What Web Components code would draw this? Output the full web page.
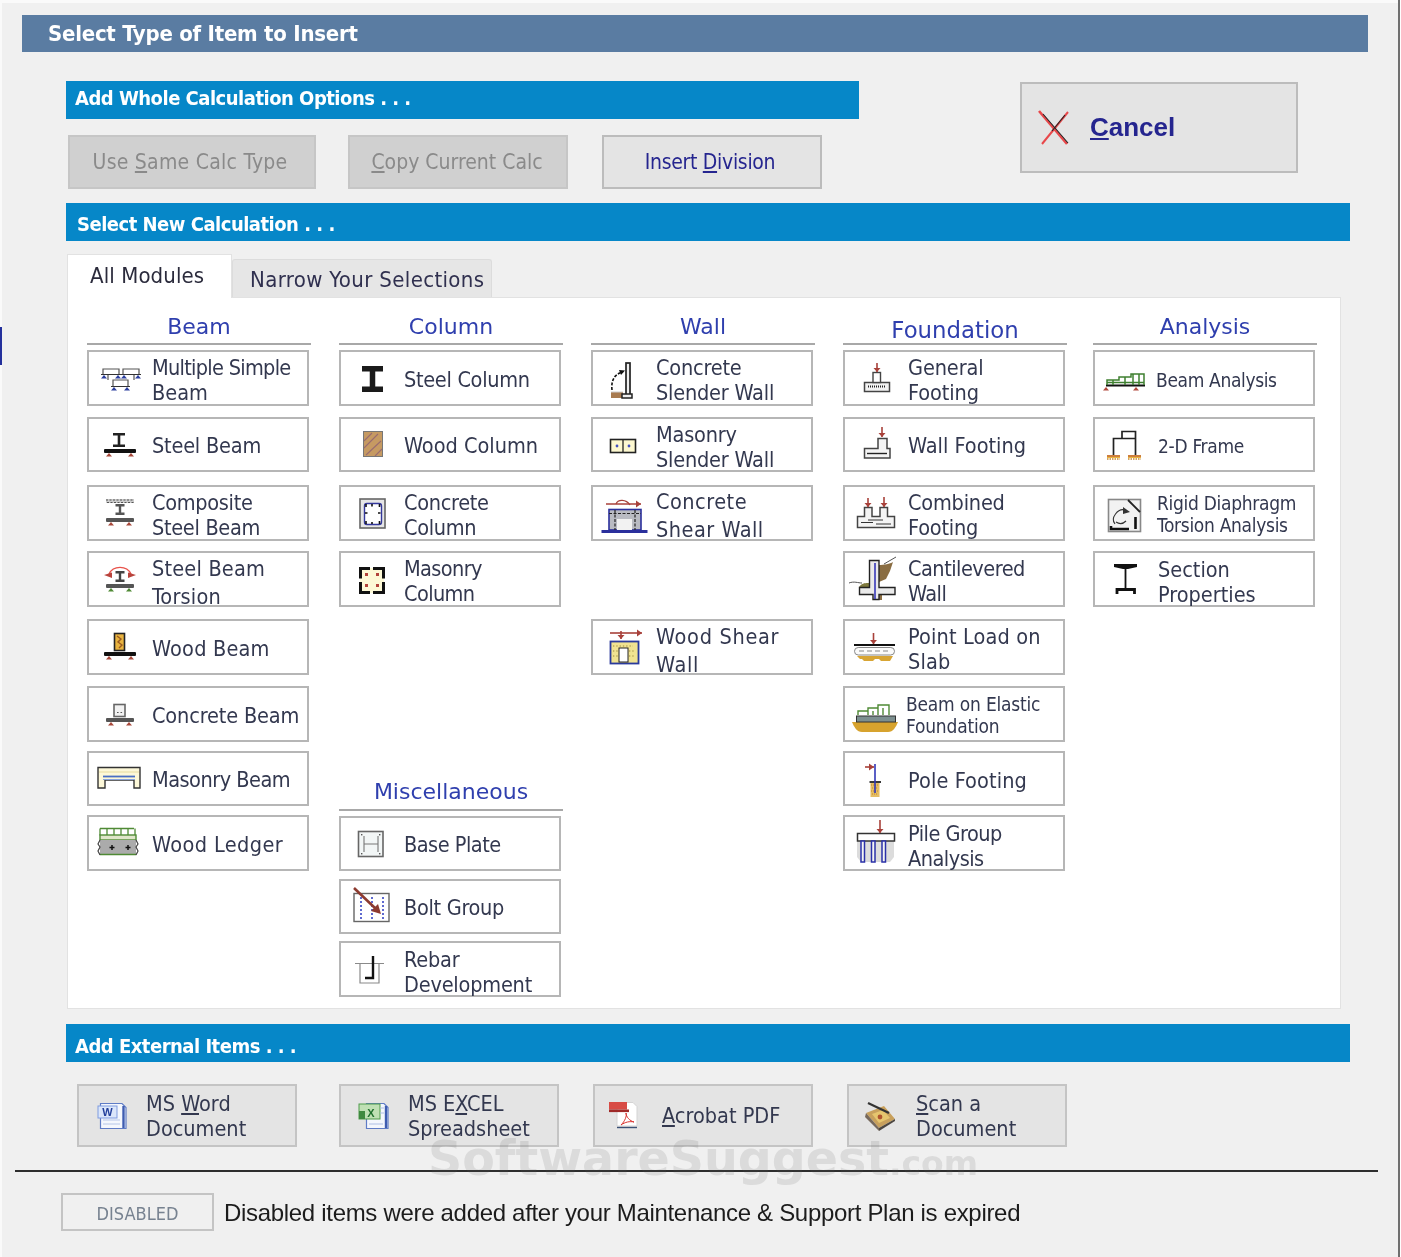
<!doctype html>
<html>
<head>
<meta charset="utf-8">
<title>Select Type of Item to Insert</title>
<style>
    html, body { margin: 0; background: #fff; }
    body { font-family: "DejaVu Sans Condensed", "DejaVu Sans", sans-serif; }
</style>
<script>
    // small drawing helpers for the engineering glyphs
    const sup = (x, y, c) => `<path d="M${x - 3} ${y + 3.5}H${x + 3}L${x} ${y}Z" fill="${c}"/>`;
    const deck = (y, bar, c, x0 = 16, x1 = 44) =>
        `<rect x="${x0}" y="${y}" width="${x1 - x0}" height="4" rx="1" fill="${bar}"/>` + sup(x0 + 5, y + 4, c) + sup(x1 - 5, y + 4, c);
    const ibeam = (x, y, w, h, t, c) =>
        `<path d="M${x - w / 2} ${y}h${w}v${t}h${-w / 2 + t / 2}v${h - 2 * t}h${w / 2 - t / 2}v${t}h${-w}v${-t}h${w / 2 - t / 2}v${-h + 2 * t}h${-w / 2 + t / 2}z" fill="${c}"/>`;
    const arrowDown = (x, y0, y1, c = '#a8413a') =>
        `<path d="M${x} ${y0}V${y1}" stroke="${c}" stroke-width="1.6" fill="none"/><path d="M${x - 3.5} ${y1 - 4}H${x + 3.5}L${x} ${y1}Z" fill="${c}"/>`;
    const arrowRight = (x0, x1, y, c = '#a8413a') =>
        `<path d="M${x0} ${y}H${x1}" stroke="${c}" stroke-width="1.6" fill="none"/><path d="M${x1 - 5} ${y - 3.5}V${y + 3.5}L${x1} ${y}Z" fill="${c}"/>`;
    const stroke = (d, c = '#333', w = 1.4, extra = '') => `<path d="${d}" fill="none" stroke="${c}" stroke-width="${w}" ${extra}/>`;
    const left = (n, s) => `<g transform="translate(${-n})">${s}</g>`;

    const ICONS = {
        multi: stroke('M13 20V15H29V20M33 20V15H49V20M23 32V26H38V32M18 21V26M44 21V26', '#555', 1.2)
            + '<path d="M11 20H31V21H11zM31 20H51V21H31zM21 32H40V33H21z" fill="#333"/>'
            + sup(14, 21, '#2c3f9e') + sup(28, 21, '#2c3f9e') + sup(34, 21, '#2c3f9e') + sup(48, 21, '#2c3f9e') + sup(24, 33, '#2c3f9e') + sup(37, 33, '#2c3f9e'),
        steel: ibeam(29, 12, 12, 14, 2.6, '#222') + deck(28, '#111', '#a8483a', 14, 46),
        composite: '<rect x="16" y="10" width="28" height="4" fill="#ccc"/>' + stroke('M16 11H44M17 13.5H44', '#555', 1, 'stroke-dasharray="2 1.5"')
            + ibeam(30, 15, 9, 11, 2.4, '#555') + deck(29, '#555', '#a8483a'),
        torsion: ibeam(30, 16, 9, 11, 2.4, '#444') + deck(29, '#555', '#4f8a35')
            + stroke('M19 19A12 11 0 0 1 41 19', '#e8524a', 1.4)
            + '<path d="M14 20L22 17.5V23ZM46 20L38 17.5V23Z" fill="#b8433c"/>',
        wood: '<rect x="24.5" y="10.5" width="10" height="17" fill="#e8b33f" stroke="#222" stroke-width="1.6"/><path d="M27 13l4 3-3 3 4 3-3 3" stroke="#9b5a20" stroke-width="1.4" fill="none"/>' + deck(29, '#111', '#a8483a', 14, 46),
        concrete: '<rect x="24" y="14.5" width="11" height="12" fill="#f2f2f2" stroke="#666" stroke-width="1.6"/><path d="M27 22.5h1.6M30.5 22.5h1.6" stroke="#555" stroke-width="1.2"/>' + deck(28, '#555', '#a8483a'),
        masonry: '<path d="M8 12.5H50V33H44V25H15V33H8Z" fill="#fdf8d8" stroke="#333" stroke-width="1.4"/>'
            + stroke('M9 17H49', '#e8dca0', 1.2) + stroke('M13 21.5H45', '#4a6fc4', 1.8) + stroke('M13 24.5H45', '#8ba5dc', 1),
        ledger: '<path d="M10 9.5h34M10 9.5v7M17 9.5v7M24 9.5v7M31 9.5v7M38 9.5v7M45 9.5v7" stroke="#4f8a35" stroke-width="1.3" fill="none"/>'
            + '<rect x="10" y="16" width="36" height="5" fill="#dfe6c9" stroke="#4f8a35" stroke-width="1.4"/>'
            + '<rect x="10" y="21" width="36" height="14" fill="#ababab"/>'
            + stroke('M10 35.5H46', '#4f8a35', 1.6) + stroke('M22 26v5M19.5 28.5h5M38 26v5M35.5 28.5h5', '#111', 1.5)
            + stroke('M10 21l-2 4 2 3-2 4 2 4M46 21l2 4-2 3 2 4-2 4', '#444', 1.2),
        sColumn: ibeam(30.5, 12, 21, 26, 5.5, '#1a1a1a'),
        wColumn: '<rect x="21.5" y="10.5" width="19" height="25" fill="#c69a62" stroke="#777" stroke-width="1"/><path d="M22 20l8-8M22 27l14-14M24 34l15-14M33 35l7-7" stroke="#9a6c70" stroke-width="1.1" fill="none"/>',
        cColumn: '<rect x="18" y="10" width="25" height="29" fill="#e6e6e6" stroke="#666" stroke-width="1.6"/><rect x="22.5" y="14.5" width="17" height="21" rx="2.5" fill="#fff" stroke="#34389c" stroke-width="1.4"/>'
            + stroke('M24 15V18M30 15v2.5M37.5 15v3M23 24h2.5M36 24h2.5M24 32v3M30 33v2M37.5 32v3', '#111', 1.6),
        mColumn: '<rect x="18" y="13" width="24" height="25" fill="#fdf9d6"/><path d="M18.5 23.5V13.5H28M31 13.5H41.5V23.5M18.5 27V37.5H28M31 37.5H41.5V27" fill="none" stroke="#111" stroke-width="3"/>'
            + '<g fill="#b2433a"><rect x="23" y="18" width="3" height="3"/><rect x="34" y="18" width="3" height="3"/><rect x="23" y="29" width="3" height="3"/><rect x="34" y="29" width="3" height="3"/></g>',
        base: '<rect x="16.5" y="11.5" width="24.5" height="25" fill="#f2f6f6" stroke="#666" stroke-width="1.6"/>' + stroke('M22 16V32M36 16V32M22 24H36', '#777', 1.1)
            + '<g fill="#555"><rect x="19" y="14" width="1.4" height="1.4"/><rect x="37" y="14" width="1.4" height="1.4"/><rect x="19" y="33" width="1.4" height="1.4"/><rect x="37" y="33" width="1.4" height="1.4"/></g>',
        bolt: '<rect x="12" y="10.5" width="35" height="28" fill="#fff" stroke="#666" stroke-width="1.4"/>' + stroke('M19 14V38M30 14V38M41 14V38', '#2a38c0', 1.5, 'stroke-dasharray="2 2"')
            + stroke('M12 5L34 26', '#8d3b30', 2.6) + '<path d="M39 31L29 28L36 21Z" fill="#8d3b30"/>',
        rebar: stroke('M13 18.5H42M18 18.5V38H37V18.5', '#8a8a8a', 1.2) + stroke('M31 11V33H23', '#111', 2.4),
        slender: '<rect x="32" y="9" width="4" height="32" fill="#f0f0f0" stroke="#222" stroke-width="1.7"/><rect x="17" y="38" width="12" height="6" fill="#a87b50"/><rect x="28" y="40" width="10" height="4" fill="#eee" stroke="#222" stroke-width="1.5"/><path d="M17 38h12" stroke="#ccc" stroke-width="1"/>'
            + stroke('M18 36C17 27 20 20 29 18', '#111', 1.6, 'stroke-dasharray="3 1.5"') + '<path d="M31 16.5L25 16L27 21Z" fill="#111"/>',
        mSlender: '<rect x="16.5" y="18.5" width="25" height="13" fill="#fdf8d0" stroke="#222" stroke-width="1.6"/><path d="M29 19V31" stroke="#222" stroke-width="1.3"/><circle cx="23" cy="25" r="1.4" fill="#4450c0"/><circle cx="35" cy="25" r="1.4" fill="#4450c0"/>',
        cShear: '<rect x="15" y="20.5" width="32" height="20.5" fill="#b9bbc2" stroke="#2a2f9c" stroke-width="1.6"/><rect x="23" y="30" width="15" height="11" fill="#f2f2f2"/>'
            + stroke('M15 24.5H47M21 21V41M41 21V41', '#222', 1.2, 'stroke-dasharray="3 1.5"')
            + '<rect x="7.5" y="41" width="46" height="3" fill="#2a2f9c"/>' + arrowRight(12, 47, 15) + stroke('M22 15C24 10 32 10 36 16', '#a8413a', 1.3),
        wShear: '<rect x="16.5" y="18.5" width="28" height="22" fill="#f0e391" stroke="#2a3a9c" stroke-width="1.8"/><rect x="25" y="25" width="9" height="14" fill="#fff" stroke="#222" stroke-width="1"/><path d="M19 23h20M19 28h5M35 28h6M19 33h5M35 33h6" stroke="#9d8a3c" stroke-width="1.2" stroke-dasharray="1.3 2" fill="none"/>'
            + arrowRight(16, 48, 10) + arrowDown(27, 8, 16),
        general: '<rect x="18.5" y="28.5" width="25" height="9" fill="#f2f2f2" stroke="#444" stroke-width="1.5"/><rect x="27" y="18.5" width="7.5" height="10" fill="#fff" stroke="#444" stroke-width="1.4"/>'
            + stroke('M22 32.5H40', '#222', 1.8, 'stroke-dasharray="1 1"') + arrowDown(31, 9, 18),
        wallF: '<path d="M18.5 37V27.5H32V17.5H41V27.5H44V37Z" fill="#f4f4f4" stroke="#444" stroke-width="1.5"/>' + stroke('M21 32.5H41', '#222', 1.4) + arrowDown(36, 6, 16),
        combined: '<path d="M11.5 38.5V27.5H18.5V18.5H26V27.5H34V18.5H41.5V27.5H48.5V38.5Z" fill="#f4f4f4" stroke="#444" stroke-width="1.5"/>'
            + stroke('M15 33.5H27M30 35H45M22 31H37', '#333', 1.2) + arrowDown(22, 9, 18) + arrowDown(38, 8, 18),
        canti: '<path d="M33 10C38 10 44 9 47 7L44 16L40 24L33 27Z" fill="#8a6d42"/><path d="M13 32C16 27 22 28 24 28V33H13Z" fill="#7f7a3e"/><path d="M27 40h9v5h-9z" fill="#8a6d42"/>'
            + stroke('M38 9L50 2M3 28C8 26 12 28 16 28', '#555', 1)
            + '<path d="M23.5 5.5H33V32.5H49V39.5H33V44.5H27V39.5H13.5V32.5H23.5Z" fill="#eaeaea" stroke="#222" stroke-width="1.4"/>' + stroke('M29 8V44', '#3838b8', 1.6),
        pointLoad: stroke('M8 22H49', '#111', 1.8) + '<rect x="8.5" y="24.5" width="40" height="7.5" rx="3.7" fill="#fbfbfb" stroke="#888" stroke-width="1"/>' + stroke('M13 28H45', '#888', 1.2, 'stroke-dasharray="5 3"')
            + '<path d="M11 33H47L44 38H35L33 36H29L27 38H18L16 36H14Z" fill="#d8a534"/>' + arrowDown(27.5, 10, 21),
        elastic: '<path d="M6 32H52C50 37 47 42 42 42H16C11 42 8 37 6 32Z" fill="#d7a32e"/><rect x="10.5" y="26" width="39" height="6" fill="#7c8f8f" stroke="#333" stroke-width="1"/>'
            + stroke('M12 25V21H22V18H32V15H43V25M22 21V25M32 18V25M27 25V21M37 25V18', '#4f8a35', 1.4),
        pole: '<rect x="24.5" y="28" width="9" height="14" fill="#e5bd63"/><path d="M25 30h8M26 33h6M25 36h8M26 39h6" stroke="#c2852f" stroke-width="1" stroke-dasharray="1 1"/>' + stroke('M23.5 27H35', '#222', 1.8) + stroke('M29 9V38', '#3138b8', 1.6) + arrowRight(19, 28, 12),
        pile: '<path d="M11 22H48V38L44 43H15L11 38Z" fill="#dcdcdc"/><rect x="11.5" y="14.5" width="37" height="7.5" fill="#fff" stroke="#333" stroke-width="1.5"/>'
            + '<g fill="#f4f4f4" stroke="#2a30a8" stroke-width="1.5"><rect x="15" y="22" width="3.5" height="21"/><rect x="25.5" y="22" width="3.5" height="21"/><rect x="36" y="22" width="3.5" height="21"/></g>' + arrowDown(34, 1, 14),
        bAnalysis: left(7, stroke('M17 31.5H56', '#111', 1.8) + sup(17, 33, '#b2483c') + sup(47, 33, '#b2483c')
            + stroke('M18 31V26H30V23H42V20H55V31M24 31V26M36 31V23M44 31V20M50 31V20M18 28.5H55', '#3f8030', 1.5)),
        frame: left(7, stroke('M24.5 34V17.5H46.5V34M33 17.5V10.5H46.5V17.5', '#222', 1.7)
            + '<rect x="18" y="34" width="13" height="3" fill="#e9b53f"/><rect x="39" y="34" width="13" height="3" fill="#e9b53f"/>'
            + stroke('M18 35H31M39 35H52', '#b2483c', 1.2) + stroke('M18 38H31M39 38H52', '#c8872f', 1.4, 'stroke-dasharray="1.5 1"')),
        rigid: left(7, '<rect x="19.5" y="10.5" width="32" height="32" fill="#f2f2f2" stroke="#888" stroke-width="1.6"/>'
            + stroke('M39 11L51 23', '#222', 1.8) + stroke('M22 37V40H40M46.5 28V40', '#111', 2.6)
            + stroke('M26 35C21 29 29 19 36 21', '#333', 1.1) + '<path d="M41 23L34 18V25Z" fill="#333"/>' + stroke('M37 32C34 35 30 35 27 33', '#333', 1.1)),
        section: left(7, '<path d="M25 9H48V12L39 14H34L25 12Z" fill="#111"/>' + stroke('M36.5 13V34', '#111', 1.8)
            + stroke('M28 39V34.5H45.5V39', '#111', 2.8)),
        word: '<path d="M11.5 3.5H33L37 7.5V28.5H11.5Z" fill="#f4f7fd" stroke="#5f7cc6" stroke-width="1.2"/><path d="M34.5 6V28" stroke="#3e5cb0" stroke-width="2.4"/>'
            + stroke('M14 24H31M14 20H31', '#b6c6e8', 1) + '<rect x="9" y="6" width="19" height="12" fill="#dbe6fa" stroke="#7f9be0" stroke-width="1"/>'
            + '<text x="18.5" y="16" font-family="Liberation Sans" font-weight="700" font-size="11" text-anchor="middle" fill="#24409c">W</text>',
        excel: '<path d="M15.5 3.5H33L37 7.5V28.5H15.5Z" fill="#f4f7fd" stroke="#5f7cc6" stroke-width="1.2"/><path d="M35 6V28" stroke="#3e5cb0" stroke-width="2.4"/><rect x="8" y="4" width="21" height="15" fill="#bfe0b4" stroke="#4e9b4b" stroke-width="1"/><rect x="8" y="11" width="6" height="8" fill="#3f8a40"/>'
            + '<text x="20" y="16.5" font-family="Liberation Sans" font-weight="700" font-size="11" text-anchor="middle" fill="#1f6f2d">X</text>' + stroke('M18 24H32M29 8H33M29 13H33', '#aebfe4', 1),
        pdf: '<path d="M12 2.5H28L32 6.5V26H12Z" fill="#fff" stroke="#d4d4d4" stroke-width="1"/><rect x="4" y="2" width="18" height="7.5" fill="#d84b45"/><rect x="4" y="9.5" width="20" height="2.6" fill="#9f2a28"/>'
            + stroke('M16 25C20 21 22 16 21 13C21 17 25 21 29 22C25 21 20 22 16 25Z', '#d9322e', 1) + stroke('M12 27.5H32', '#3a5074', 1.4),
        scan: left(10, '<path d="M17 13L35 6L46 19L30 28Z" fill="#c8a05c"/><path d="M17 13L30 28L30 31L16 17Z" fill="#77695c"/><path d="M30 28L46 19V21L30 31Z" fill="#4c4640"/>'
            + '<path d="M23 14L34 10L41 18L30 23Z" fill="#e6c56e"/><circle cx="31" cy="17" r="2.4" fill="#b0542e"/><path d="M19 3L40 13" stroke="#333" stroke-width="2.2" fill="none"/>')
    };

    class CalcIcon extends HTMLElement {
        connectedCallback() {
            if (this.shadowRoot) return;
            const w = +(this.getAttribute('w') || 60);
            const h = +(this.getAttribute('h') || 48);
            this.attachShadow({mode: 'open'}).innerHTML = `
                <style>
                    :host { display: block; width: ${w}px; height: ${h}px; flex: none; }
                    svg { display: block; }
                </style>
                <svg width="${w}" height="${h}" viewBox="0 0 ${w} ${h}">${ICONS[this.getAttribute('name')] || ''}</svg>`;
        }
    }

    class TitleBar extends HTMLElement {
        constructor() {
            super();
            this.attachShadow({mode: 'open'}).innerHTML = `
                <style>
                    :host {
                        display: flex; align-items: center; box-sizing: border-box;
                        height: 37px; margin-left: 22px; width: 1346px; padding-left: 26px;
                        background: #5a7ca2; color: #fff;
                        font: 700 22px "DejaVu Sans Condensed", "DejaVu Sans", sans-serif; letter-spacing: -.25px;
                    }
                </style>
                <slot></slot>`;
        }
    }

    class SectionBar extends HTMLElement {
        constructor() {
            super();
            this.attachShadow({mode: 'open'}).innerHTML = `
                <style>
                    :host {
                        display: flex; align-items: center; box-sizing: border-box;
                        height: 38px; padding: var(--pt, 0) 0 var(--pb, 0) var(--pad, 9px);
                        background: #0687c8; color: #fff;
                        font: 700 20px "DejaVu Sans Condensed", "DejaVu Sans", sans-serif; letter-spacing: -.5px;
                    }
                </style>
                <slot></slot>`;
        }
    }

    class ActionButton extends HTMLElement {
        constructor() {
            super();
            this.attachShadow({mode: 'open'}).innerHTML = `
                <style>
                    :host {
                        display: flex; align-items: center; justify-content: center; box-sizing: border-box;
                        flex: none; background: #e4e4e4; border: 2px solid #bcbcbc; color: #25258f;
                        font-size: 21px; line-height: 24px;
                    }
                    :host([off]) { background: #d0d0d0; border-color: #c6c6c6; color: #8a8a8a; }
                </style>
                <slot></slot>`;
        }
    }

    class ExternalButton extends HTMLElement {
        constructor() {
            super();
            this.attachShadow({mode: 'open'}).innerHTML = `
                <style>
                    :host {
                        display: flex; align-items: center; box-sizing: border-box; flex: none;
                        width: 220px; height: 63px; padding-left: 10px;
                        background: #e4e4e4; border: 2px solid #c4c4c4; color: #33384f;
                        font-size: 21.5px; line-height: 25px;
                    }
                    .text { margin-left: 9px; }
                </style>
                <slot name="icon"></slot>
                <div class="text"><slot></slot></div>`;
        }
    }

    class CalcTabs extends HTMLElement {
        constructor() {
            super();
            this.attachShadow({mode: 'open'}).innerHTML = `
                <style>
                    :host { display: flex; align-items: flex-end; margin: 13px 0 -1px 67px; position: relative; z-index: 1; font-size: 22px; }
                    .tab { box-sizing: border-box; display: flex; align-items: center; }
                    .on { width: 165px; height: 44px; background: #fff; border: 1px solid #e2e2e2; border-bottom: 0; padding-left: 22px; color: #2b2b3c; padding-bottom: 3px; letter-spacing: .1px; }
                    .off { width: 260px; height: 38px; margin-bottom: 1px; background: #e6e6e6; border: 1px solid #dcdcdc; border-bottom: 0; padding: 2px 0 0 17px; color: #30304f; border-radius: 3px 3px 0 0; letter-spacing: .35px; }
                </style>
                <div class="tab on">All Modules</div>
                <div class="tab off">Narrow Your Selections</div>`;
        }
    }

    class ModuleTile extends HTMLElement {
        connectedCallback() {
            if (this.shadowRoot) return;
            this.attachShadow({mode: 'open'}).innerHTML = `
                <style>
                    :host {
                        display: flex; align-items: center; box-sizing: border-box;
                        width: 222px; height: var(--h, 56px); margin-top: var(--mt, 0);
                        padding-left: 1px; background: #fff; border: 2px solid #b6b6b6;
                        color: #33384f; font-size: var(--fs, 21.5px); line-height: var(--lh, 25px);
                        letter-spacing: var(--ls, 0);
                    }
                    .text { margin-left: var(--tx, 2px); padding-top: var(--pt, 4px); white-space: nowrap; }
                    :host([single]) .text { padding-top: var(--pt, 2px); }
                </style>
                <calc-icon name="${this.getAttribute('icon')}"></calc-icon>
                <div class="text"><slot></slot></div>`;
        }
    }

    class ModuleHeading extends HTMLElement {
        constructor() {
            super();
            this.attachShadow({mode: 'open'}).innerHTML = `
                <style>
                    :host {
                        display: block; box-sizing: border-box; width: 224px; height: 47px;
                        padding-top: var(--pt, 16px); margin-bottom: 5px; text-align: center;
                        border-bottom: 2px solid #a8a8a8; color: #2f3fae;
                        font-family: "DejaVu Sans", sans-serif; font-size: 22px; line-height: 26px;
                    }
                </style>
                <slot></slot>`;
        }
    }

    class ModulePanel extends HTMLElement {
        constructor() {
            super();
            this.attachShadow({mode: 'open'}).innerHTML = `
                <style>
                    :host {
                        display: grid; grid-template-columns: 252px 252px 252px 250px 224px;
                        box-sizing: border-box; width: 1274px; height: 712px; margin-left: 67px;
                        padding-left: 19px; background: #fff; border: 1px solid #e2e2e2;
                    }
                </style>
                <slot></slot>`;
        }
    }

    class ModuleColumn extends HTMLElement {
        constructor() {
            super();
            this.attachShadow({mode: 'open'}).innerHTML = `
                <style>:host { display: flex; flex-direction: column; }</style>
                <slot></slot>`;
        }
    }

    class DialogShell extends HTMLElement {
        constructor() {
            super();
            this.attachShadow({mode: 'open'}).innerHTML = `
                <style>
                    :host {
                        display: flex; flex-direction: column; position: relative; box-sizing: border-box;
                        width: 1400px; height: 1257px; padding-top: 15px; overflow: hidden;
                        background: #f0f0f0; box-shadow: inset 2px 3px 0 #fafafa;
                        border-right: 2px solid #6f6f6f; filter: blur(.3px);
                    }
                    .mark { position: absolute; left: 0; top: 327px; width: 2px; height: 38px; background: #24309c; }
                    .watermark {
                        position: absolute; left: 428px; top: 1131px; white-space: nowrap; pointer-events: none;
                        color: rgba(90, 90, 90, .14); font: 700 47.5px "DejaVu Sans", sans-serif;
                    }
                    .watermark span { font-size: 33px; }
                </style>
                <slot></slot>
                <div class="mark"></div>
                <div class="watermark">SoftwareSuggest<span>.com</span></div>`;
        }
    }

    window.customElements.define('calc-icon', CalcIcon);
    window.customElements.define('title-bar', TitleBar);
    window.customElements.define('section-bar', SectionBar);
    window.customElements.define('action-button', ActionButton);
    window.customElements.define('external-button', ExternalButton);
    window.customElements.define('calc-tabs', CalcTabs);
    window.customElements.define('module-tile', ModuleTile);
    window.customElements.define('module-heading', ModuleHeading);
    window.customElements.define('module-panel', ModulePanel);
    window.customElements.define('module-column', ModuleColumn);
    window.customElements.define('dialog-shell', DialogShell);
</script>
</head>
<body>
<dialog-shell>
    <title-bar>Select Type of Item to Insert</title-bar>

    <div style="display:flex;margin:29px 0 0 66px">
        <div style="width:793px">
            <section-bar style="--pb:4px">Add Whole Calculation Options . . .</section-bar>
            <div style="display:flex;margin:16px 0 0 2px;gap:32px">
                <action-button off style="width:248px;height:54px;letter-spacing:.25px;padding-right:4px">Use&nbsp;<u>S</u>ame Calc Type</action-button>
                <action-button off style="width:220px;height:54px;padding-right:2px"><u>C</u>opy Current Calc</action-button>
                <action-button style="width:220px;height:54px;margin-left:2px;letter-spacing:-.3px;padding-right:4px">Insert&nbsp;<u>D</u>ivision</action-button>
            </div>
        </div>
        <action-button style="width:278px;height:91px;margin:1px 0 0 161px;justify-content:flex-start;padding-left:10px;font:700 26px 'Liberation Sans',sans-serif">
            <svg width="48" height="40" viewBox="0 0 48 40" style="flex:none"><path d="M7 3L35 36" stroke="#e8474a" stroke-width="2.6" fill="none"/><path d="M36 4L10 36" stroke="#e8474a" stroke-width="2" fill="none"/><path d="M11 6L36 35M33 7L20 23" stroke="#222" stroke-width="1.1" fill="none"/></svg>
            <span style="margin-left:10px"><u>C</u>ancel</span>
        </action-button>
    </div>

    <section-bar style="margin:14px 0 0 66px;width:1284px;--pad:11px;--pt:4px">Select New Calculation . . .</section-bar>

    <calc-tabs></calc-tabs>

    <module-panel>
        <module-column>
            <module-heading>Beam</module-heading>
            <module-tile icon="multi" style="--ls:-.7px">Multiple Simple<br><span style="letter-spacing:0">Beam</span></module-tile>
            <module-tile single icon="steel" style="--mt:11px;--h:55px;--ls:-.2px">Steel Beam</module-tile>
            <module-tile icon="composite" style="--mt:13px;--ls:-.3px">Composite<br>Steel Beam</module-tile>
            <module-tile icon="torsion" style="--mt:10px;--lh:28px;--pt:8px;--ls:.2px">Steel Beam<br>Torsion</module-tile>
            <module-tile single icon="wood" style="--mt:12px;--ls:.2px">Wood Beam</module-tile>
            <module-tile single icon="concrete" style="--mt:11px;--ls:-.15px">Concrete Beam</module-tile>
            <module-tile single icon="masonry" style="--mt:9px;--h:55px;--ls:-.5px">Masonry Beam</module-tile>
            <module-tile single icon="ledger" style="--mt:9px;--ls:.4px">Wood Ledger</module-tile>
        </module-column>

        <module-column>
            <module-heading>Column</module-heading>
            <module-tile single icon="sColumn" style="--ls:-.3px">Steel Column</module-tile>
            <module-tile single icon="wColumn" style="--mt:11px;--h:55px">Wood Column</module-tile>
            <module-tile icon="cColumn" style="--mt:13px;--ls:-.3px">Concrete<br>Column</module-tile>
            <module-tile icon="mColumn" style="--mt:10px;--ls:-.6px">Masonry<br>Column</module-tile>
            <module-heading style="margin-top:157px;--pt:15px">Miscellaneous</module-heading>
            <module-tile single icon="base" style="--h:55px;--ls:-.5px">Base Plate</module-tile>
            <module-tile single icon="bolt" style="--mt:8px;--h:55px;--ls:-.3px">Bolt Group</module-tile>
            <module-tile icon="rebar" style="--mt:7px;--ls:-.2px;--pt:6px">Rebar<br>Development</module-tile>
        </module-column>

        <module-column>
            <module-heading>Wall</module-heading>
            <module-tile icon="slender" style="--ls:-.2px">Concrete<br>Slender Wall</module-tile>
            <module-tile icon="mSlender" style="--mt:11px;--h:55px;--ls:-.2px">Masonry<br>Slender Wall</module-tile>
            <module-tile icon="cShear" style="--mt:13px;--lh:28px;--pt:6px;--ls:.5px">Concrete<br>Shear Wall</module-tile>
            <module-tile icon="wShear" style="--mt:78px;--lh:28px;--pt:8px;--ls:.7px">Wood Shear<br>Wall</module-tile>
        </module-column>

        <module-column>
            <module-heading style="--pt:19px;font-size:22.8px">Foundation</module-heading>
            <module-tile icon="general" style="--ls:-.1px">General<br>Footing</module-tile>
            <module-tile icon="wallF" style="--mt:11px;--h:55px;--pt:2px">Wall Footing</module-tile>
            <module-tile icon="combined" style="--mt:13px;--ls:-.2px">Combined<br>Footing</module-tile>
            <module-tile icon="canti" style="--mt:10px;--ls:-.5px">Cantilevered<br>Wall</module-tile>
            <module-tile icon="pointLoad" style="--mt:12px;--ls:.15px">Point Load on<br>Slab</module-tile>
            <module-tile icon="elastic" style="--mt:11px;--fs:19px;--lh:22px;--tx:0px;--ls:-.2px;--pt:2px">Beam on Elastic<br>Foundation</module-tile>
            <module-tile icon="pole" style="--mt:9px;--h:55px;--ls:.1px">Pole Footing</module-tile>
            <module-tile icon="pile" style="--mt:9px;--ls:-.5px;--pt:6px">Pile Group<br>Analysis</module-tile>
        </module-column>

        <module-column>
            <module-heading>Analysis</module-heading>
            <module-tile icon="bAnalysis" style="--fs:19px;--tx:0px;--ls:-.35px">Beam Analysis</module-tile>
            <module-tile icon="frame" style="--mt:11px;--h:55px;--fs:19px;--ls:-.3px">2-D Frame</module-tile>
            <module-tile icon="rigid" style="--mt:13px;--fs:19px;--lh:22px;--tx:1px;--ls:-.3px;--pt:2px">Rigid Diaphragm<br>Torsion Analysis</module-tile>
            <module-tile icon="section" style="--mt:10px;--pt:6px">Section<br>Properties</module-tile>
        </module-column>
    </module-panel>

    <section-bar style="margin:15px 0 0 66px;width:1284px;--pt:6px">Add External Items . . .</section-bar>

    <div style="display:flex;margin:22px 0 0 77px">
        <external-button><calc-icon slot="icon" name="word" w="48" h="32"></calc-icon>MS <u>W</u>ord<br>Document</external-button>
        <external-button style="margin-left:42px"><calc-icon slot="icon" name="excel" w="48" h="32"></calc-icon>MS E<u>X</u>CEL<br>Spreadsheet</external-button>
        <external-button style="margin-left:34px"><calc-icon slot="icon" name="pdf" w="48" h="32"></calc-icon><u>A</u>crobat PDF</external-button>
        <external-button style="margin-left:34px"><calc-icon slot="icon" name="scan" w="48" h="32"></calc-icon><u>S</u>can a<br>Document</external-button>
    </div>

    <div style="margin:23px 0 0 15px;width:1363px;height:2px;background:#2e2e2e"></div>

    <div style="display:flex;align-items:center;margin:21px 0 0 61px">
        <div style="box-sizing:border-box;width:153px;height:38px;padding-top:3px;border:2px solid #c4c4c4;display:flex;align-items:center;justify-content:center;color:#778290;font-size:18px">DISABLED</div>
        <div style="margin:1px 0 0 10px;color:#1c1c1c;font:24px 'Liberation Sans',sans-serif;letter-spacing:-.31px">Disabled items were added after your Maintenance &amp; Support Plan is expired</div>
    </div>
</dialog-shell>
</body>
</html>
